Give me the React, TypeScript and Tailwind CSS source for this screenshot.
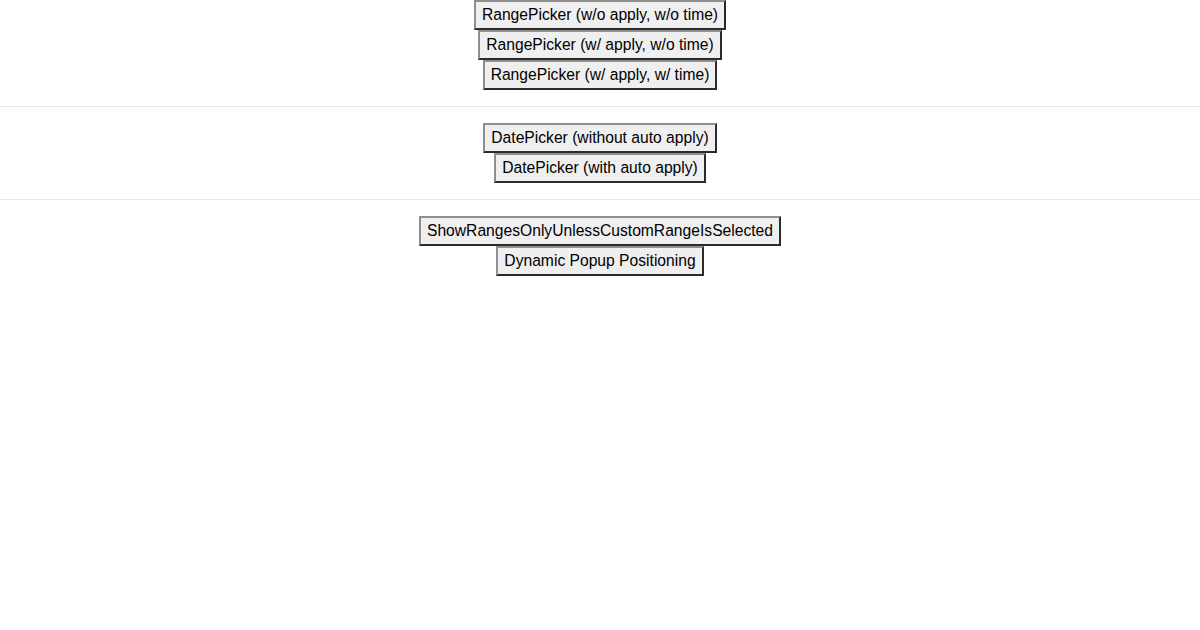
import React from "react";

const GROUPS: string[][] = [
  [
    "RangePicker (w/o apply, w/o time)",
    "RangePicker (w/ apply, w/o time)",
    "RangePicker (w/ apply, w/ time)",
  ],
  ["DatePicker (without auto apply)", "DatePicker (with auto apply)"],
  ["ShowRangesOnlyUnlessCustomRangeIsSelected", "Dynamic Popup Positioning"],
];

function DemoButton({ label }: { label: string }) {
  return (
    <button
      type="button"
      className="block px-[6px] py-px border-2 border-t-[#8f8f8f] border-l-[#8f8f8f] border-b-[#2b2b2b] border-r-[#2b2b2b] bg-[#efefef] text-black text-[15.65px] leading-6"
    >
      {label}
    </button>
  );
}

export default function App() {
  return (
    <div className="min-h-[630px] bg-white font-['Liberation_Sans',Arial,sans-serif]">
      {GROUPS.map((group, i) => (
        <React.Fragment key={i}>
          {i > 0 && <hr className="my-4 border-t border-[#e6e6e6]" />}
          <div className="flex flex-col items-center">
            {group.map((label) => (
              <DemoButton key={label} label={label} />
            ))}
          </div>
        </React.Fragment>
      ))}
    </div>
  );
}
